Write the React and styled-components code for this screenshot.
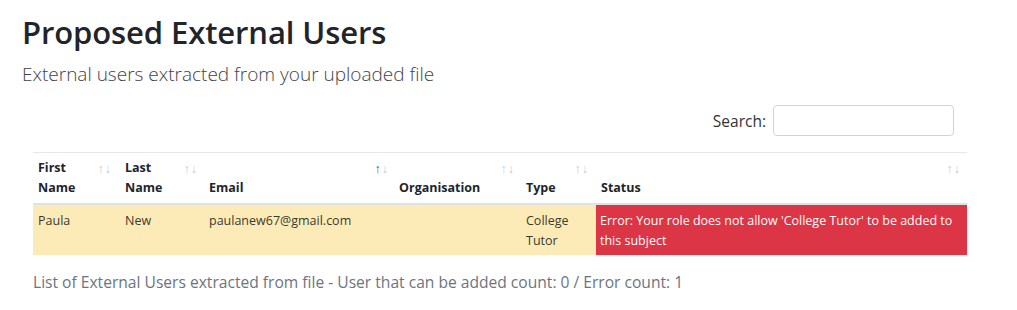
import React from "react";
import styled, { createGlobalStyle } from "styled-components";

const Global = createGlobalStyle`
  html, body { margin: 0; padding: 0; background: #ffffff; }
  body { font-family: "Open Sans", "Noto Sans", sans-serif; color: #212529; }
`;

const Page = styled.div`
  width: 1017px;
  height: 310px;
  padding: 12px 0 0 0;
  box-sizing: border-box;
  overflow: hidden;
`;

const Header = styled.header`
  padding-left: 22px;
`;

const Title = styled.h2`
  margin: 0;
  font-size: 31px;
  line-height: 40px;
  font-weight: 600;
  color: #212529;
  letter-spacing: -0.1px;
`;

const Lead = styled.p`
  margin: 7px 0 0 0;
  font-size: 19px;
  line-height: 30px;
  font-weight: 300;
  color: #3f4347;
`;

const Section = styled.section`
  margin-left: 33px;
  width: 934px;
`;

const SearchRow = styled.div`
  display: flex;
  justify-content: flex-end;
  align-items: center;
  gap: 7px;
  padding-right: 13px;
  margin-top: 16px;
`;

const SearchLabel = styled.label`
  font-size: 15.5px;
  color: #333;
`;

const SearchInput = styled.input`
  width: 181px;
  height: 31px;
  box-sizing: border-box;
  border: 1px solid #ced4da;
  border-radius: 4px;
  outline: none;
  padding: 4px 8px;
`;

const Table = styled.table`
  margin-top: 16px;
  width: 934px;
  table-layout: fixed;
  border-collapse: collapse;
  font-size: 12.5px;
  line-height: 20px;
`;

const Th = styled.th`
  position: relative;
  box-sizing: border-box;
  text-align: left;
  vertical-align: bottom;
  font-weight: 700;
  color: #212529;
  padding: 5px;
  border-top: 1px solid #e6e8ea;
  border-bottom: 2px solid #dee2e6;
  width: ${(p) => p.$w}px;
`;

const Sort = styled.span`
  position: absolute;
  top: 6px;
  right: ${(p) => p.$r}px;
  font-size: 12.5px;
  font-weight: 400;
  letter-spacing: 1px;
  color: #c9cbcd;
  b {
    font-weight: 400;
    color: ${(p) => (p.$asc ? "#55595c" : "#c9cbcd")};
  }
`;

const Row = styled.tr`
  background: #fdebb7;
`;

const Td = styled.td`
  box-sizing: border-box;
  vertical-align: top;
  padding: 6px 5px 4px;
  color: ${(p) => (p.$error ? "#ffffff" : "#3a3a30")};
  background: ${(p) => (p.$error ? "#dc3545" : "transparent")};
  padding-left: ${(p) => (p.$error ? 4 : 5)}px;
`;

const Footer = styled.p`
  margin: 16px 0 0 0;
  font-size: 15.6px;
  color: #6c757d;
`;

const columns = [
  { key: "first", label: ["First", "Name"], w: 87, r: 8 },
  { key: "last", label: ["Last", "Name"], w: 84, r: 6 },
  { key: "email", label: ["Email"], w: 190, r: 5, asc: true },
  { key: "org", label: ["Organisation"], w: 127, r: 6 },
  { key: "type", label: ["Type"], w: 75, r: 7 },
  { key: "status", label: ["Status"], w: 371, r: 6 },
];

export default function App() {
  return (
    <Page>
      <Global />
      <Header>
        <Title>Proposed External Users</Title>
        <Lead>External users extracted from your uploaded file</Lead>
      </Header>
      <Section>
        <SearchRow>
          <SearchLabel htmlFor="search">Search:</SearchLabel>
          <SearchInput id="search" type="search" />
        </SearchRow>
        <Table>
          <thead>
            <tr>
              {columns.map((c) => (
                <Th key={c.key} $w={c.w}>
                  {c.label.map((l, i) => (
                    <React.Fragment key={l}>
                      {i > 0 && <br />}
                      {l}
                    </React.Fragment>
                  ))}
                  <Sort $r={c.r} $asc={c.asc}>
                    <b>↑</b>↓
                  </Sort>
                </Th>
              ))}
            </tr>
          </thead>
          <tbody>
            <Row>
              <Td>Paula</Td>
              <Td>New</Td>
              <Td>paulanew67@gmail.com</Td>
              <Td></Td>
              <Td>College Tutor</Td>
              <Td $error>
                Error: Your role does not allow 'College Tutor' to be added to
                this subject
              </Td>
            </Row>
          </tbody>
        </Table>
        <Footer>
          List of External Users extracted from file - User that can be added
          count: 0 / Error count: 1
        </Footer>
      </Section>
    </Page>
  );
}
